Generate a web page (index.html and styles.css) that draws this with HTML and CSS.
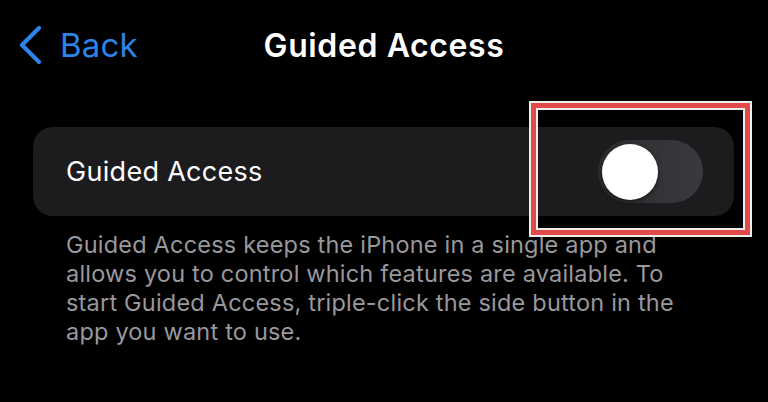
FILE: index.html
```html
<!DOCTYPE html>
<html lang="en">
<head>
  <meta charset="UTF-8" />
  <meta name="viewport" content="width=device-width, initial-scale=1.0"/>
  <title>Guided Access</title>
  <link rel="stylesheet" href="styles.css">
</head>
<body>
  <header class="navbar">
    <a class="back" href="#">
      <svg class="chevron" width="26" height="40" viewBox="0 0 26 40">
        <path d="M22 3 L5 20 L22 37" fill="none" stroke="currentColor" stroke-width="4.2" stroke-linecap="round" stroke-linejoin="round"/>
      </svg>
      <span>Back</span>
    </a>
    <div class="title">Guided Access</div>
    <div></div>
  </header>
  <main class="content">
    <div class="card">
      <div class="row">
        <span class="label">Guided Access</span>
        <div class="switch"><div class="knob"></div></div>
      </div>
      <div class="highlight"></div>
    </div>
    <p class="footer">Guided Access keeps the iPhone in a single app and allows you to control which features are available. To start Guided Access, triple-click the side button in the app you want to use.</p>
  </main>
</body>
</html>
```

FILE: styles.css
```css
body {
  margin: 0;
  background-color: #000;
  font-family: Inter, "Noto Sans", sans-serif;
  color: #fff;
}
.navbar {
  display: grid;
  grid-template-columns: 1fr auto 1fr;
  align-items: center;
  height: 90px;
}
.back {
  display: flex;
  align-items: center;
  gap: 17px;
  padding-left: 17px;
  color: #2b84ea;
  text-decoration: none;
  font-size: 33px;
  letter-spacing: 0.2px;
}
.chevron {
  flex-shrink: 0;
}
.title {
  font-size: 32px;
  font-weight: 600;
  letter-spacing: 0.6px;
}
.content {
  padding: 37px 34px 0 33px;
}
.card {
  position: relative;
  background-color: #1c1c1e;
  border-radius: 20px;
}
.row {
  display: flex;
  justify-content: space-between;
  align-items: center;
  height: 89px;
  padding: 0 31px 0 33px;
}
.label {
  font-size: 27px;
  letter-spacing: 0.3px;
}
.switch {
  width: 105px;
  height: 63px;
  border-radius: 32px;
  background: linear-gradient(90deg, #2c2c2f, #3a3a3e);
  display: flex;
  align-items: center;
  padding-left: 4px;
  box-sizing: border-box;
}
.knob {
  width: 56px;
  height: 56px;
  border-radius: 50%;
  background-color: #fff;
  box-shadow: 0 2px 4px rgba(0, 0, 0, 0.5);
}
/* red callout drawn over the switch */
.highlight {
  position: absolute;
  left: 498px;
  top: -24px;
  width: 209px;
  height: 122px;
  border: 5px solid #e24a4a;
  box-shadow: 0 0 0 2px #eee, inset 0 0 0 2px #eee;
}
.footer {
  margin: 14px 0 0 33px;
  padding-right: 30px;
  font-size: 23.5px;
  line-height: 29px;
  color: #98989d;
  letter-spacing: 0.2px;
}
```
